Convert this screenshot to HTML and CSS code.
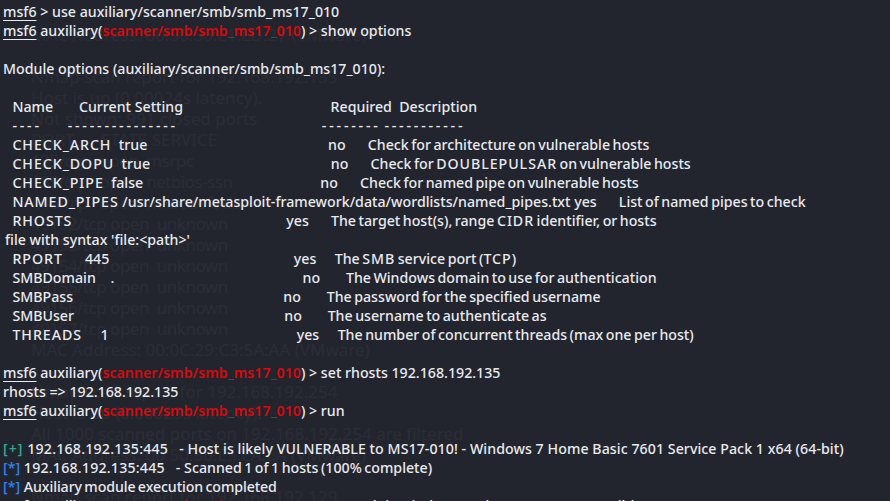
FILE: index.html
```html
<!DOCTYPE html>
<html lang="en">
<head>
<meta charset="utf-8">
<title>msf6</title>
<link rel="stylesheet" href="styles.css">
</head>
<body>
<pre class="ghost">MAC Address: 00:50:56:E1:ED:27 (VMware)

Nmap scan report for 192.168.192.135
Host is up (0.00024s latency).
Not shown: 991 closed ports
PORT      STATE SERVICE
<span class="port">135/tcp   open  msrpc
139/tcp   open  netbios-ssn
445/tcp   open  microsoft-ds
49152/tcp open  unknown
49153/tcp open  unknown
49154/tcp open  unknown
49155/tcp open  unknown
49156/tcp open  unknown
49157/tcp open  unknown</span>
MAC Address: 00:0C:29:C3:5A:AA (VMware)

Nmap scan report for 192.168.192.254
Host is up (0.00023s latency).
All 1000 scanned ports on 192.168.192.254 are filtered
MAC Address: 00:50:56:E5:EA:6A (VMware)

Nmap scan report for 192.168.192.129</pre>
<div class="term">
<pre class="block"><u>msf6</u> &gt; use auxiliary/scanner/smb/smb_ms17_010
<u>msf6</u> auxiliary(<b>scanner/smb/smb_ms17_010</b>) &gt; show options

Module options (auxiliary/scanner/smb/smb_ms17_010):

</pre>
<pre class="block options">  Name       Current Setting                                        Required  Description
  <span class="dash">----</span>       <span class="dash">---------------</span>                                       <span class="dash">--------</span> <span class="dash">-----------</span>
  <span class="nm">CHECK_ARCH</span>  true                                                 no      <span class="d">Check for architecture on vulnerable hosts</span>
  <span class="nm">CHECK_DOPU</span>  true                                                 no      <span class="d">Check for <span class="nm">DOUBLEPULSAR</span> on vulnerable hosts</span>
  <span class="nm">CHECK_PIPE</span>  false                                                no      <span class="d">Check for named pipe on vulnerable hosts</span>
  <span class="nm">NAMED_PIPES</span> /usr/share/metasploit-framework/data/wordlists/named_pipes.txt yes      <span class="d">List of named pipes to check</span>
  <span class="nm">RHOSTS</span>                                                          yes      <span class="d">The target host(s), range <span class="nm">CIDR</span> identifier, or hosts</span>
file with syntax 'file:&lt;path&gt;'
  <span class="nm">RPORT</span>      445                                                  yes     <span class="d">The <span class="nm">SMB</span> service port (<span class="nm">TCP</span>)</span>
  SMBDomain    .                                                   no       <span class="d">The Windows domain to use for authentication</span>
  SMBPass                                                         no       <span class="d">The password for the specified username</span>
  SMBUser                                                         no       <span class="d">The username to authenticate as</span>
  <span class="nm">THREADS</span>     1                                                   yes     <span class="d">The number of concurrent threads (max one per host)</span>

</pre>
<pre class="block"><u>msf6</u> auxiliary(<b>scanner/smb/smb_ms17_010</b>) &gt; set rhosts 192.168.192.135
rhosts =&gt; 192.168.192.135
<u>msf6</u> auxiliary(<b>scanner/smb/smb_ms17_010</b>) &gt; run

<span class="ok">[+]</span> <span class="ip">192.168.192.135:445</span>   - <span class="wide">Host is likely VULNERABLE to MS17-010! - Windows 7 Home Basic 7601 Service Pack 1 x64 (64-bit)</span>
<span class="info">[*]</span> <span class="ip">192.168.192.135:445</span>   - <span class="d">Scanned 1 of 1 hosts (100% complete)</span>
<span class="info">[*]</span> <span class="d tight">Auxiliary module execution completed</span>
<u>msf6</u> auxiliary(<b>scanner/smb/smb_ms17_010</b>) &gt; use exploit/windows/smb/ms17_010_eternalblue
</pre>
</div>
</body>
</html>
```

FILE: styles.css
```css
html, body {
  margin: 0;
  height: 100%;
  overflow: hidden;
  background: #23252e;
}
body {
  position: relative;
  width: 890px;
  height: 501px;
}
.term {
  position: relative;
  padding: 2px 0 0 3px;
  font: 500 14.2px/19px "Noto Sans", sans-serif;
  color: #e8eaee;
}
.block {
  margin: 0;
  font: inherit;
  white-space: pre;
}
.options {
  padding-left: 2px;
}
.term b {
  font-weight: 600;
  color: #d8090c;
}
.term u {
  text-underline-offset: 3px;
}
.dash { letter-spacing: 2.8px; }
.nm { letter-spacing: .95px; }
.d { word-spacing: -1.2px; }
.tight { letter-spacing: -.1px; }
.ip { letter-spacing: .2px; }
.wide { letter-spacing: .05px; }
.ok { color: #2fa88f; font-weight: 600; letter-spacing: 1px; }
.info { color: #2f7fe8; font-weight: 600; }
.ghost {
  position: absolute;
  left: 31px;
  top: 23.5px;
  margin: 0;
  font: 17px/21px "Noto Sans", sans-serif;
  color: #2b2d36;
  white-space: pre;
}
.port { letter-spacing: -.5px; }
```
